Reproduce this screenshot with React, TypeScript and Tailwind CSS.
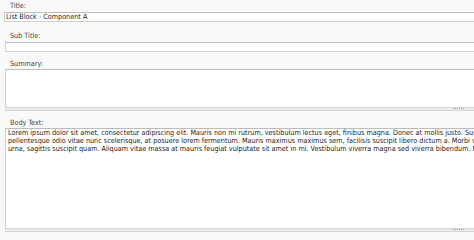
export default function App() {
  const body = [
    "Lorem ipsum dolor sit amet, consectetur adipiscing elit. Mauris non mi rutrum, vestibulum lectus eget, finibus magna. Donec at mollis justo. Suspendisse",
    "pellentesque odio vitae nunc scelerisque, at posuere lorem fermentum. Mauris maximus maximus sem, facilisis suscipit libero dictum a. Morbi vitae",
    "urna, sagittis suscipit quam. Aliquam vitae massa at mauris feugiat vulputate sit amet in mi. Vestibulum viverra magna sed viverra bibendum. Mauris",
  ];
  return (
    <div
      className="w-[474px] h-[240px] overflow-hidden bg-[#f9f9f9] text-[7.2px] leading-[8px] text-[#222]"
      style={{ fontFamily: "'DejaVu Sans Condensed', 'Liberation Sans', sans-serif" }}
    >
      <Label className="pt-[2px]">Title:</Label>
      <div className="ml-[4px] mt-[2px] h-[10px] bg-white border-t border-b border-l border-[#cfcfcf] border-t-[#bdbdbd] pl-[1px] flex items-center">
        List Block - Component A
      </div>

      <Label className="pt-[10px]">Sub Title:</Label>
      <div className="ml-[5px] mt-[2px] h-[10px] bg-white border-t border-b border-l border-[#cfcfcf] border-t-[#bdbdbd]" />

      <Label className="pt-[8px]">Summary:</Label>
      <div className="ml-[5px] mt-[1px] h-[38px] bg-white border-t border-l border-[#cfcfcf] border-t-[#bdbdbd]" />
      <Grip />

      <Label className="pt-[8px]">Body Text:</Label>
      <div className="ml-[5px] mt-[1px] h-[100px] bg-white border-t border-l border-[#cfcfcf] border-t-[#bdbdbd] pl-[2px] overflow-hidden">
        {body.map((l, i) => (
          <div key={i} className="whitespace-nowrap">
            {l}
          </div>
        ))}
      </div>
      <Grip />
    </div>
  );
}

function Label({ children, className = "" }: { children: string; className?: string }) {
  return <div className={`pl-[10px] text-[#444] ${className}`}>{children}</div>;
}

function Grip() {
  return (
    <div className="ml-[5px] h-[4px] bg-[#ececec] border-t border-b border-[#d4d4d4] relative">
      <div className="absolute right-[10px] top-[0px] flex gap-[1px]">
        {[0, 1, 2, 3, 4, 5].map((i) => (
          <span key={i} className="w-[1px] h-[1px] bg-[#8aa0c0]" />
        ))}
      </div>
    </div>
  );
}
